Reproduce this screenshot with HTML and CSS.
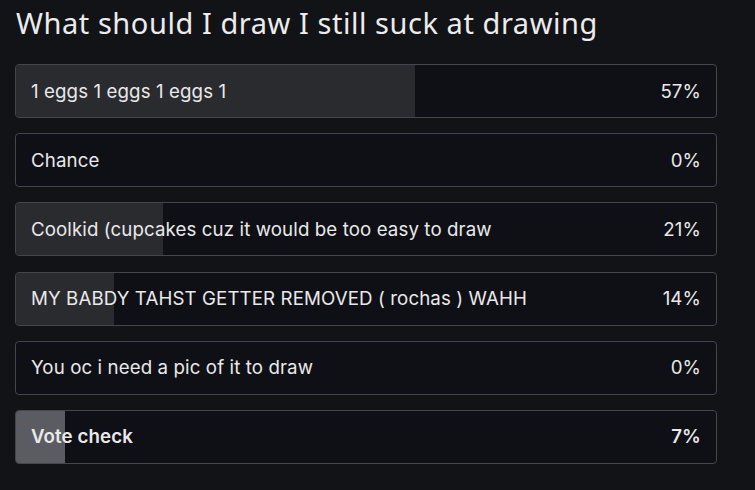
FILE: index.html
```html
<!DOCTYPE html>
<html lang="en">
  <head>
    <meta charset="utf-8">
    <title>Poll</title>
    <link rel="stylesheet" href="styles.css">
  </head>
  <body>
    <h1 class="question">What should I draw I still suck at drawing</h1>
    <div class="answers">
      <div class="answer">
        <div class="fill" style="width: 57%"></div>
        <span class="label">1 eggs 1 eggs 1 eggs 1</span>
        <span class="pct">57%</span>
      </div>
      <div class="answer">
        <div class="fill" style="width: 0%"></div>
        <span class="label">Chance</span>
        <span class="pct">0%</span>
      </div>
      <div class="answer">
        <div class="fill" style="width: 21%"></div>
        <span class="label">Coolkid (cupcakes cuz it would be too easy to draw</span>
        <span class="pct">21%</span>
      </div>
      <div class="answer">
        <div class="fill" style="width: 14%"></div>
        <span class="label">MY BABDY TAHST GETTER REMOVED ( rochas ) WAHH</span>
        <span class="pct">14%</span>
      </div>
      <div class="answer">
        <div class="fill" style="width: 0%"></div>
        <span class="label">You oc i need a pic of it to draw</span>
        <span class="pct">0%</span>
      </div>
      <div class="answer voted">
        <div class="fill" style="width: 7%"></div>
        <span class="label">Vote check</span>
        <span class="pct">7%</span>
      </div>
    </div>
  </body>
</html>
```

FILE: styles.css
```css
body{
  background-color: #121317;
  color: #e9e9ea;
  margin: 0;
  padding: 0 38px 0 15px;
  font-family: Inter, "Noto Sans", sans-serif;
}
.question{
  font-family: "Noto Sans", Inter, sans-serif;
  font-weight: 400;
  font-size: 29px;
  letter-spacing: 0.55px;
  line-height: 46px;
  margin: 0 0 18px 1px;
  color: #ececed;
}
.answers{
  display: flex;
  flex-direction: column;
  gap: 15.2px;
}
.answer{
  position: relative;
  display: flex;
  align-items: center;
  justify-content: space-between;
  height: 52px;
  padding: 0 15px 0 15px;
  border: 1px solid #45464b;
  border-radius: 4px;
  background-color: #0f1015;
  overflow: hidden;
  font-size: 18.7px;
  letter-spacing: 0.1px;
}
.fill{
  position: absolute;
  left: 0;
  top: 0;
  bottom: 0;
  background-color: #2a2b2f;
}
.voted .fill{
  background-color: #5b5c61;
}
.voted{
  font-weight: 600;
}
.label, .pct{
  position: relative;
}
```
